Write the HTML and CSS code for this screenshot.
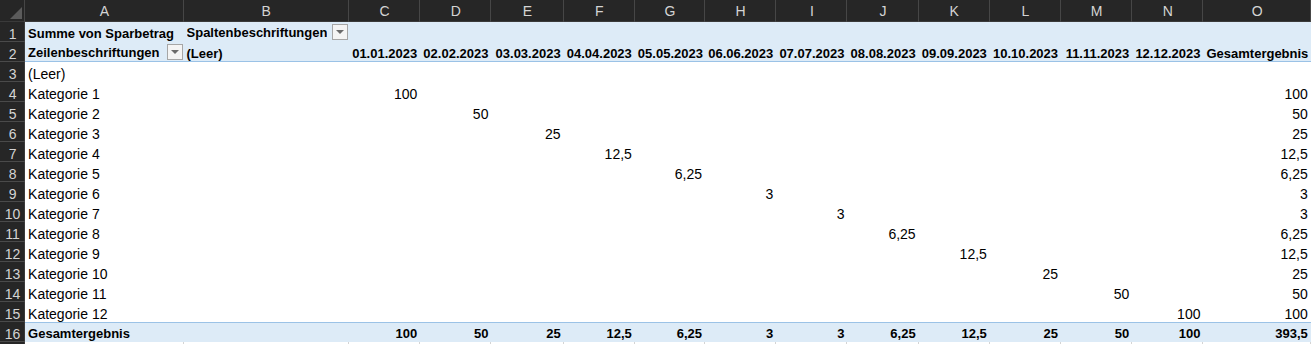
FILE: index.html
```html
<!DOCTYPE html>
<html lang="de">
<head>
    <meta charset="UTF-8">
    <title>Pivot Sparbetrag</title>
    <link rel="stylesheet" href="styles.css">
</head>
<body>
    <table class="sheet">
        <colgroup>
            <col style="width:25px"><col style="width:158px"><col style="width:165px">
            <col style="width:71px"><col style="width:71px"><col style="width:72px"><col style="width:71px">
            <col style="width:70px"><col style="width:71px"><col style="width:71px"><col style="width:71px">
            <col style="width:71px"><col style="width:71px"><col style="width:71px"><col style="width:71px">
            <col style="width:107px"><col style="width:10px">
        </colgroup>
        <tr class="colhead">
            <th class="corner"><svg width="12" height="12" viewBox="0 0 12 12"><polygon points="12,0 12,12 0,12" fill="#5b5b5b"/></svg></th>
            <th>A</th><th>B</th><th>C</th><th>D</th><th>E</th><th>F</th><th>G</th><th>H</th>
            <th>I</th><th>J</th><th>K</th><th>L</th><th>M</th><th>N</th><th>O</th><th></th>
        </tr>
        <tr class="pv-head">
            <td class="rh">1</td>
            <td class="b">Summe von Sparbetrag</td>
            <td class="b"><div class="filter"><span>Spaltenbeschriftungen</span><span class="dd"></span></div></td>
            <td></td><td></td><td></td><td></td><td></td><td></td><td></td><td></td><td></td><td></td><td></td><td></td><td></td>
            <td class="grid"></td>
        </tr>
        <tr class="pv-head pv-cols">
            <td class="rh">2</td>
            <td class="b"><div class="filter"><span>Zeilenbeschriftungen</span><span class="dd"></span></div></td>
            <td class="b">(Leer)</td>
            <td class="b r">01.01.2023</td><td class="b r">02.02.2023</td><td class="b r">03.03.2023</td>
            <td class="b r">04.04.2023</td><td class="b r">05.05.2023</td><td class="b r">06.06.2023</td>
            <td class="b r">07.07.2023</td><td class="b r">08.08.2023</td><td class="b r">09.09.2023</td>
            <td class="b r">10.10.2023</td><td class="b r">11.11.2023</td><td class="b r">12.12.2023</td>
            <td class="b r">Gesamtergebnis</td>
            <td class="grid"></td>
        </tr>
        <tr>
            <td class="rh">3</td><td>(Leer)</td>
            <td></td><td></td><td></td><td></td><td></td><td></td><td></td><td></td><td></td><td></td><td></td><td></td><td></td><td></td>
            <td class="grid"></td>
        </tr>
        <tr>
            <td class="rh">4</td><td>Kategorie 1</td><td></td>
            <td class="r">100</td><td></td><td></td><td></td><td></td><td></td><td></td><td></td><td></td><td></td><td></td><td></td>
            <td class="r">100</td><td class="grid"></td>
        </tr>
        <tr>
            <td class="rh">5</td><td>Kategorie 2</td><td></td>
            <td></td><td class="r">50</td><td></td><td></td><td></td><td></td><td></td><td></td><td></td><td></td><td></td><td></td>
            <td class="r">50</td><td class="grid"></td>
        </tr>
        <tr>
            <td class="rh">6</td><td>Kategorie 3</td><td></td>
            <td></td><td></td><td class="r">25</td><td></td><td></td><td></td><td></td><td></td><td></td><td></td><td></td><td></td>
            <td class="r">25</td><td class="grid"></td>
        </tr>
        <tr>
            <td class="rh">7</td><td>Kategorie 4</td><td></td>
            <td></td><td></td><td></td><td class="r">12,5</td><td></td><td></td><td></td><td></td><td></td><td></td><td></td><td></td>
            <td class="r">12,5</td><td class="grid"></td>
        </tr>
        <tr>
            <td class="rh">8</td><td>Kategorie 5</td><td></td>
            <td></td><td></td><td></td><td></td><td class="r">6,25</td><td></td><td></td><td></td><td></td><td></td><td></td><td></td>
            <td class="r">6,25</td><td class="grid"></td>
        </tr>
        <tr>
            <td class="rh">9</td><td>Kategorie 6</td><td></td>
            <td></td><td></td><td></td><td></td><td></td><td class="r">3</td><td></td><td></td><td></td><td></td><td></td><td></td>
            <td class="r">3</td><td class="grid"></td>
        </tr>
        <tr>
            <td class="rh">10</td><td>Kategorie 7</td><td></td>
            <td></td><td></td><td></td><td></td><td></td><td></td><td class="r">3</td><td></td><td></td><td></td><td></td><td></td>
            <td class="r">3</td><td class="grid"></td>
        </tr>
        <tr>
            <td class="rh">11</td><td>Kategorie 8</td><td></td>
            <td></td><td></td><td></td><td></td><td></td><td></td><td></td><td class="r">6,25</td><td></td><td></td><td></td><td></td>
            <td class="r">6,25</td><td class="grid"></td>
        </tr>
        <tr>
            <td class="rh">12</td><td>Kategorie 9</td><td></td>
            <td></td><td></td><td></td><td></td><td></td><td></td><td></td><td></td><td class="r">12,5</td><td></td><td></td><td></td>
            <td class="r">12,5</td><td class="grid"></td>
        </tr>
        <tr>
            <td class="rh">13</td><td>Kategorie 10</td><td></td>
            <td></td><td></td><td></td><td></td><td></td><td></td><td></td><td></td><td></td><td class="r">25</td><td></td><td></td>
            <td class="r">25</td><td class="grid"></td>
        </tr>
        <tr>
            <td class="rh">14</td><td>Kategorie 11</td><td></td>
            <td></td><td></td><td></td><td></td><td></td><td></td><td></td><td></td><td></td><td></td><td class="r">50</td><td></td>
            <td class="r">50</td><td class="grid"></td>
        </tr>
        <tr>
            <td class="rh">15</td><td>Kategorie 12</td><td></td>
            <td></td><td></td><td></td><td></td><td></td><td></td><td></td><td></td><td></td><td></td><td></td><td class="r">100</td>
            <td class="r">100</td><td class="grid"></td>
        </tr>
        <tr class="pv-total">
            <td class="rh">16</td><td class="b">Gesamtergebnis</td><td></td>
            <td class="b r">100</td><td class="b r">50</td><td class="b r">25</td><td class="b r">12,5</td>
            <td class="b r">6,25</td><td class="b r">3</td><td class="b r">3</td><td class="b r">6,25</td>
            <td class="b r">12,5</td><td class="b r">25</td><td class="b r">50</td><td class="b r">100</td>
            <td class="b r">393,5</td><td class="grid"></td>
        </tr>
        <tr class="empty">
            <td class="rh"></td>
            <td class="grid"></td><td class="grid"></td><td class="grid"></td><td class="grid"></td><td class="grid"></td>
            <td class="grid"></td><td class="grid"></td><td class="grid"></td><td class="grid"></td><td class="grid"></td>
            <td class="grid"></td><td class="grid"></td><td class="grid"></td><td class="grid"></td><td class="grid"></td>
            <td class="grid"></td>
        </tr>
    </table>
</body>
</html>
```

FILE: styles.css
```css
body {
    margin: 0;
    background-color: #ffffff;
    font-family: "Liberation Sans", Arial, sans-serif;
    overflow: hidden;
}

.sheet {
    table-layout: fixed;
    border-collapse: separate;
    border-spacing: 0;
    width: 1321px;
    font-size: 14px;
    color: #000000;
}

.sheet td, .sheet th {
    height: 20px;
    padding: 4px 3px 0 3px;
    box-sizing: border-box;
    line-height: 16px;
    vertical-align: top;
    white-space: nowrap;
    overflow: visible;
    font-weight: normal;
}

/* column letters */
.colhead th {
    height: 22px;
    padding: 3px 0 0 0;
    background-color: #262626;
    color: #d4d4d4;
    font-size: 14px;
    text-align: center;
    box-shadow: inset -1px 0 0 #464646, inset 0 -1px 0 #3a3a3a;
}

.colhead th.corner {
    position: relative;
    padding: 0;
}

.corner svg {
    position: absolute;
    left: 10px;
    top: 7px;
}

/* row numbers */
.sheet td.rh {
    background-color: #262626;
    color: #d4d4d4;
    text-align: center;
    padding-left: 0;
    padding-right: 0;
    font-size: 14px;
    box-shadow: inset 0 -1px 0 #4a4a4a, inset -1px 0 0 #3a3a3a;
}

.b {
    font-weight: bold;
    font-size: 13px;
}

.sheet td.b {
    font-weight: bold;
}

.r {
    text-align: right;
}

.pv-head td:not(.rh):not(.grid),
.pv-total td:not(.rh):not(.grid) {
    background-color: #ddebf7;
}

.pv-cols td:not(.rh):not(.grid) {
    box-shadow: inset 0 -1px 0 #9bc2e6;
}

.pv-total td:not(.rh):not(.grid) {
    box-shadow: inset 0 1px 0 #9bc2e6;
}

.sheet td.grid {
    box-shadow: inset 1px 0 0 #d4d4d4;
}

.empty td.grid {
    box-shadow: inset -1px 0 0 #d4d4d4;
}

.filter {
    display: flex;
    align-items: center;
    justify-content: space-between;
    margin-top: -4px;
    height: 20px;
    margin-right: -3px;
}

.filter span:first-child {
    padding-top: 1px;
    overflow: hidden;
}

.dd {
    flex-shrink: 0;
    width: 16px;
    height: 16px;
    box-sizing: border-box;
    border: 1px solid #a6a6a6;
    background-color: #f4f4f4;
    position: relative;
    margin-right: 1px;
}

.dd::after {
    content: "";
    position: absolute;
    left: 3px;
    top: 5px;
    border-left: 4px solid transparent;
    border-right: 4px solid transparent;
    border-top: 4px solid #6b6b6b;
}
```
